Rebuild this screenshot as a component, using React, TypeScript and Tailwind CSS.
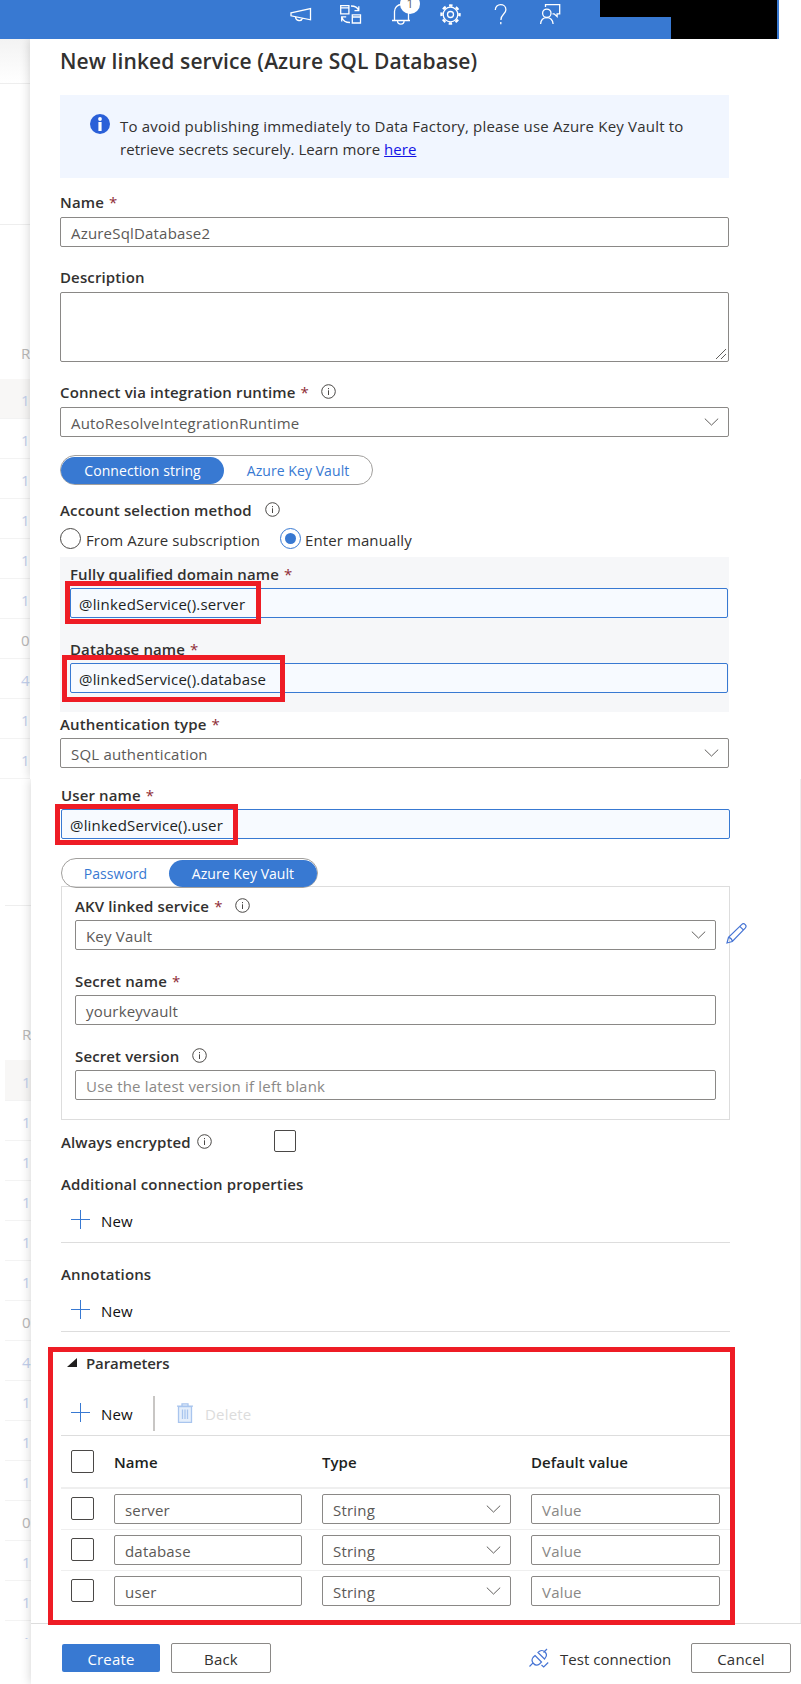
import { ReactNode } from "react";
import clsx from "clsx";

const rowsTop = ["1", "1", "1", "1", "1", "1", "0", "4", "1", "1"];
const rowsBottom = ["1", "1", "1", "1", "1", "1", "0", "4", "1", "1", "1", "0", "1", "1"];
const parameters = ["server", "database", "user"];

const InfoIcon = ({ className }: { className?: string }) => (
  <svg className={clsx("h-[15px] w-[15px] shrink-0", className)} viewBox="0 0 15 15" fill="none" stroke="#4a4846">
    <circle cx="7.5" cy="7.5" r="6.8" strokeWidth="1" />
    <path d="M7.5 6.3v4.7M7.5 4v1.2" strokeWidth="1" />
  </svg>
);

const Chevron = () => (
  <svg className="h-2 w-[15px] shrink-0" viewBox="0 0 15 8" fill="none" stroke="#605e5c">
    <path d="M.8.6l6.7 6.5L14.2.6" />
  </svg>
);

const Plus = () => (
  <svg className="h-[19px] w-[19px] shrink-0" viewBox="0 0 19 19" stroke="#3879d2">
    <path d="M0 9.5h19M9.5 0v19" />
  </svg>
);

const Checkbox = ({ className }: { className?: string }) => (
  <div className={clsx("shrink-0 rounded-[2px] border border-[#4a4846] bg-white", className)} />
);

const Label = ({
  children,
  required,
  info,
  className,
}: {
  children: ReactNode;
  required?: boolean;
  info?: boolean;
  className?: string;
}) => (
  <div
    className={clsx(
      "flex h-5 items-start whitespace-nowrap font-semibold leading-5 tracking-[0.13px] text-[#323130]",
      className
    )}
  >
    <span>{children}</span>
    {required && <span className="ml-[5px] w-[7px] font-normal text-[#8e2a35]">*</span>}
    {info && <InfoIcon className="ml-[13px] mt-[2px]" />}
  </div>
);

const Box = ({
  children,
  select,
  active,
  muted,
  className,
}: {
  children?: ReactNode;
  select?: boolean;
  active?: boolean;
  muted?: boolean;
  className?: string;
}) => (
  <div
    className={clsx(
      "flex h-[30px] items-center justify-between rounded-[2px] border pr-[9px] pt-[2px] leading-5",
      active
        ? "border-[#3879d2] bg-[#f7faff] pl-2 text-[#201f1e]"
        : "border-[#8a8886] bg-white pl-[10px]",
      !active && (muted ? "text-[#8a8886]" : "text-[#5b5957]"),
      className
    )}
  >
    <span className="whitespace-nowrap">{children}</span>
    {select && (
      <span className="pb-[3px]">
        <Chevron />
      </span>
    )}
  </div>
);

const Highlight = ({ className }: { className: string }) => (
  <div className={clsx("pointer-events-none absolute z-10 border-[5px] border-[#ee1c25]", className)} />
);

const GridRow = ({ value, first, className }: { value: string; first?: boolean; className: string }) => (
  <div
    className={clsx(
      "flex shrink-0 items-center border-b border-[#f3f3f3] pt-[3px]",
      first && "bg-[#f8f7f6]",
      value === "0" ? "text-[#b9b8b7]" : "text-[#c3d0ec]",
      className
    )}
  >
    {value}
  </div>
);

const Header = () => (
  <header className="flex h-[39px] w-[779px] shrink-0 bg-[#3879d2]">
    <div className="flex flex-1 pl-[290px]">
      <svg className="h-[39px] w-[310px]" viewBox="290 0 310 39" fill="none" stroke="#fff" strokeWidth="1.3">
        <path d="M291 12.8l19.500-4.300v11.300L291 15.800zM295.500 16.800c.2 4.600 6 4.800 7 1.500" />
        <path d="M340.700 5.700h8.200v8.200h-8.200zM340.700 7.800h8.200M352.300 14.800h8.200v8.200h-8.200zM352.300 17h8.200M351 6c3.500 0 6.500 1.200 7.700 4.500M354.500 10.700h4.300V6.300M350 22.500c-3.700 0-7-1.500-8-5M341.700 21.500v-4.700h4.500" />
        <path d="M392 20.500h18M394.500 20.500v-9a7 7 0 0 1 14 0v9M397.500 20.800a3.300 3.300 0 0 0 6.600 0" />
        <circle cx="450.500" cy="14.500" r="9" strokeWidth="2.400" strokeDasharray="3.530 3.540" strokeDashoffset="1.760" />
        <circle cx="450.500" cy="14.500" r="7.300" />
        <circle cx="450.500" cy="14.500" r="3" />
        <path d="M495.300 10c0-3.500 2.500-5.300 5.300-5.300s5.300 1.800 5.300 5c0 4.500-5 4.300-5 10.300M500.800 22v2.200" />
        <circle cx="546.800" cy="13.300" r="4.200" />
        <path d="M540.600 24c.3-4 3-6.300 6.200-6.300s5.900 2.300 6.300 6.300M545.500 7V4.700h14.200v9.100h-2.600v2.700l-3-2.700h-1.600" />
      </svg>
    </div>
    <div className="flex w-[177px] flex-col items-end">
      <div className="h-[17px] w-full bg-black" />
      <div className="h-[22px] w-[106px] bg-black" />
    </div>
    <div className="w-[2px] bg-[#3879d2]" />
    <div className="absolute left-[400px] top-[-6px] flex h-5 w-5 items-center justify-center rounded-full bg-white text-[12px] text-[#605e5c]">
      1
    </div>
  </header>
);

const InfoBanner = () => (
  <div className="mt-5 flex h-[83px] bg-[#f1f6ff] pl-[30px]">
    <svg className="mt-[19px] h-5 w-5 shrink-0" viewBox="0 0 20 20">
      <circle cx="10" cy="10" r="10" fill="#2b60d8" />
      <path d="M8.400 8h3.200v9H8.400z" fill="#fff" />
      <circle cx="10" cy="5" r="1.900" fill="#fff" />
    </svg>
    <p className="ml-[10px] mt-5 whitespace-nowrap leading-[23px] text-[#323130]">
      To avoid publishing immediately to Data Factory, please use Azure Key Vault to
      <br />
      <span className="tracking-[0.04px]">
        retrieve secrets securely. Learn more <a className="text-[#1414e6] underline">here</a>
      </span>
    </p>
  </div>
);

const NewButton = () => (
  <div className="flex h-5 items-start pl-[10px]">
    <Plus />
    <span className="ml-[11px] mt-px leading-5 text-[#111]">New</span>
  </div>
);

const ParametersTable = () => (
  <div>
    <div className="flex h-[51px] items-center">
      <Checkbox className="ml-[10px] h-[23px] w-[23px]" />
      <div className="ml-5 flex pt-px font-semibold leading-5 tracking-[0.05px] text-[#201f1e]">
        <span className="w-[208px]">Name</span>
        <span className="w-[209px]">Type</span>
        <span>Default value</span>
      </div>
    </div>
    <div className="h-[2px] bg-[#efefef]" />
    {parameters.map((name, i) => (
      <div
        key={name}
        className={clsx("flex items-center pl-[10px]", i < 2 ? "h-[41px] border-b border-[#efefef]" : "h-10")}
      >
        <Checkbox className="mb-px h-[23px] w-[23px]" />
        <Box className="ml-5 w-[188px]">{name}</Box>
        <Box className="ml-5 w-[189px]" select>
          String
        </Box>
        <Box className="ml-5 w-[189px]" muted>
          Value
        </Box>
      </div>
    ))}
  </div>
);

const ConnectionForm = () => (
  <section className="z-[1] flex-1 bg-white pl-[30px] pr-[72px] shadow-[0_0_10px_rgba(0,0,0,0.18)]">
    <h1 className="mt-2 whitespace-nowrap text-[21px] font-semibold leading-7 tracking-[0.11px] text-[#323130]">
      New linked service (Azure SQL Database)
    </h1>
    <InfoBanner />
    <Label className="mb-[5px] mt-[14px]" required>
      Name
    </Label>
    <Box>AzureSqlDatabase2</Box>
    <Label className="mb-[5px] mt-5">Description</Label>
    <div className="flex h-[70px] items-end justify-end rounded-[2px] border border-[#8a8886] p-[2px]">
      <svg className="h-[10px] w-[10px]" viewBox="0 0 10 10" stroke="#605e5c">
        <path d="M0 10L10 0M5 10l5-5" />
      </svg>
    </div>
    <Label className="mb-[5px] mt-5" required info>
      Connect via integration runtime
    </Label>
    <Box select>AutoResolveIntegrationRuntime</Box>
    <div className="mt-[18px] flex h-[30px] w-[313px] items-center rounded-full border border-[#a19f9d] text-[14px] tracking-[0.07px]">
      <span className="flex h-[27px] w-[163px] items-center justify-center rounded-full bg-[#3879d2] pt-px text-white">
        Connection string
      </span>
      <span className="flex-1 pt-px text-center text-[#3879d2]">Azure Key Vault</span>
    </div>
    <Label className="mt-[15px]" info>
      Account selection method
    </Label>
    <div className="mt-2 flex h-[21px] items-center text-[#323130]">
      <span className="h-[21px] w-[21px] rounded-full border border-[#4a4846]" />
      <span className="ml-[5px] w-[194px] whitespace-nowrap pt-[3px] tracking-[0.13px]">From Azure subscription</span>
      <span className="flex h-[21px] w-[21px] items-center justify-center rounded-full border border-[#3879d2]">
        <span className="h-[11px] w-[11px] rounded-full bg-[#3879d2]" />
      </span>
      <span className="ml-1 whitespace-nowrap pt-[3px] tracking-[0.1px]">Enter manually</span>
    </div>
    <div className="mt-2 h-[155px] bg-[#f6f7f9] pl-[10px] pr-px pt-[7px]">
      <Label className="mb-1" required>
        Fully qualified domain name
      </Label>
      <div className="relative">
        <Box active>@linkedService().server</Box>
        <Highlight className="left-[-5px] top-[-7px] h-[43px] w-[196px]" />
      </div>
      <Label className="mb-1 mt-[21px]" required>
        Database name
      </Label>
      <div className="relative">
        <Box active>@linkedService().database</Box>
        <Highlight className="left-[-8px] top-[-8px] h-[47px] w-[223px]" />
      </div>
    </div>
    <Label className="mb-1 mt-[2px]" required>
      Authentication type
    </Label>
    <Box select>SQL authentication</Box>
  </section>
);

const SecretsForm = () => (
  <section className="z-[1] flex flex-1 flex-col bg-white shadow-[0_0_10px_rgba(0,0,0,0.18)]">
    <div className="h-[844px] border-r border-[#eeeeee] pl-[30px] pr-[70px] pt-[6px]">
      <Label className="mb-1" required>
        User name
      </Label>
      <div className="relative">
        <Box active>@linkedService().user</Box>
        <Highlight className="left-[-6px] top-[-5px] h-[41px] w-[183px]" />
      </div>
      <div className="relative z-[1] mt-[19px] flex h-[30px] w-[257px] items-center rounded-full border border-[#a19f9d] text-[14px] tracking-[0.05px]">
        <span className="flex-1 pt-px text-center text-[#3879d2]">Password</span>
        <span className="flex h-[27px] w-[148px] items-center justify-center rounded-full bg-[#3879d2] pt-px text-white">
          Azure Key Vault
        </span>
      </div>
      <div className="mt-[-2px] h-[234px] border border-[#dddddd] pl-[13px] pr-[13px] pt-[9px]">
        <Label className="mb-1 [&>svg]:ml-[14px]" required info>
          AKV linked service
        </Label>
        <div className="relative">
          <Box select>Key Vault</Box>
          <svg
            className="absolute left-[651px] top-[3px] h-[21px] w-[21px]"
            viewBox="0 0 21 21"
            fill="none"
            stroke="#4674d4"
            strokeWidth="1.200"
          >
            <path d="M1 20l1.500-5.700L15.600 1.600c1.300-1.200 2.700-.9 3.600 0s1.100 2.400 0 3.600L6.300 18.500zM2.500 14.300c2 .3 3.500 2 3.800 4.200M13.800 3.400l3.800 3.700" />
          </svg>
        </div>
        <Label className="mb-1 mt-[21px]" required>
          Secret name
        </Label>
        <Box>yourkeyvault</Box>
        <Label className="mb-1 mt-[21px]" info>
          Secret version
        </Label>
        <Box muted>Use the latest version if left blank</Box>
      </div>
      <div className="mt-[10px] flex h-[22px]">
        <Label className="mt-[2px] w-[213px] [&>svg]:ml-[6px]" info>
          Always encrypted
        </Label>
        <Checkbox className="h-[22px] w-[22px]" />
      </div>
      <Label className="mt-[22px]">Additional connection properties</Label>
      <div className="mt-4 h-[33px] border-b border-[#dddddd]">
        <NewButton />
      </div>
      <Label className="mt-[21px]">Annotations</Label>
      <div className="mt-4 h-8 border-b border-[#dddddd]">
        <NewButton />
      </div>
      <div className="relative pt-5">
        <Highlight className="left-[-13px] top-[15px] h-[278px] w-[687px]" />
        <div className="flex h-5 items-start pl-[6px]">
          <svg className="mt-[6px] h-[9px] w-[10px]" viewBox="0 0 10 9">
            <path d="M10 0v9H0z" fill="#201f1e" />
          </svg>
          <Label className="ml-[9px] mt-px [&>span]:tracking-[-0.1px]">Parameters</Label>
        </div>
        <div className="mt-[22px] flex h-[42px] items-start border-b border-[#dddddd]">
          <div className="mt-[9px] w-[92px]">
            <NewButton />
          </div>
          <div className="mt-[2px] h-[35px] w-[2px] bg-[#c8c6c4]" />
          <svg
            className="ml-[22px] mt-[9px] h-5 w-4"
            viewBox="0 0 16 20"
            fill="#e6effb"
            stroke="#a9c5ee"
            strokeWidth="1.300"
          >
            <path d="M1.500 3.500h13v15.800h-13zM0 3.200h16M5 3V.8h6V3M5.500 6.500v9.500M8 6.500v9.500M10.500 6.500v9.500" />
          </svg>
          <span className="ml-3 mt-[10px] leading-5 text-[#dcdcdc]">Delete</span>
        </div>
        <ParametersTable />
      </div>
    </div>
    <footer className="flex flex-1 items-start border-t border-[#dddddd] pl-[31px] pr-[10px] pt-[19px]">
      <button className="mt-px h-7 w-[98px] rounded-[2px] bg-[#3879d2] pt-px text-white">Create</button>
      <button className="ml-[11px] h-[30px] w-[100px] rounded-[2px] border border-[#8a8886] pt-px text-[#323130]">
        Back
      </button>
      <div className="ml-auto flex items-start">
        <svg className="mt-[5px] h-5 w-5" viewBox="0 0 20 20" fill="none" stroke="#4674d4" strokeWidth="1.200">
          <path d="M.5 18.500l3.300-3.300M14.500 4.500L18 1M6 7.500l6.500 6.500-2 2c-2 1.500-4.500 1.200-6-.5s-2-4-.5-6zM9 4.500L15.500 11l1-1.500c1.500-2 1-4-.5-5.500s-3.800-1.800-5.500-.8zM12.500 17l2.200 2 4.500-4.500" />
        </svg>
        <span className="ml-[11px] mt-[6px] w-[131px] whitespace-nowrap tracking-[0.04px] text-[#323130]">
          Test connection
        </span>
      </div>
      <button className="h-[30px] w-[100px] rounded-[2px] border border-[#8a8886] pt-px text-[#323130]">
        Cancel
      </button>
    </footer>
  </section>
);

export default function App() {
  return (
    <div className="relative flex h-[1684px] w-[801px] flex-col overflow-hidden bg-white font-['Open_Sans','Noto_Sans',sans-serif] text-[15px] leading-5 tracking-[0.19px]">
      <Header />
      <div className="flex h-[740px] overflow-hidden">
        <aside className="flex w-[30px] shrink-0 flex-col overflow-hidden">
          <div className="h-[45px] shrink-0 border-b border-[#eeeeee] bg-linear-to-b from-[#f3f3f3] to-white" />
          <div className="h-[141px] shrink-0 border-b border-[#eeeeee]" />
          <div className="h-[154px] shrink-0 pl-[21px] pt-[118px] text-[#b9b8b7]">R</div>
          {rowsTop.map((v, i) => (
            <GridRow key={i} value={v} first={i === 0} className="h-10 pl-[21px]" />
          ))}
        </aside>
        <ConnectionForm />
      </div>
      <div className="flex h-[905px] overflow-hidden">
        <aside className="flex w-[31px] shrink-0 flex-col overflow-hidden pl-[5px]">
          <div className="h-[127px] shrink-0 border-b border-[#eeeeee]" />
          <div className="h-[154px] shrink-0 pl-[17px] pt-[118px] text-[#b9b8b7]">R</div>
          {rowsBottom.map((v, i) => (
            <GridRow
              key={i}
              value={v}
              first={i === 0}
              className={i === 0 ? "h-[41px] pl-[17px]" : "h-10 pl-[17px]"}
            />
          ))}
          <div className="h-[18px] shrink-0 overflow-hidden pl-[17px] pt-[11px] text-[#c3d0ec]">1</div>
        </aside>
        <SecretsForm />
      </div>
    </div>
  );
}
